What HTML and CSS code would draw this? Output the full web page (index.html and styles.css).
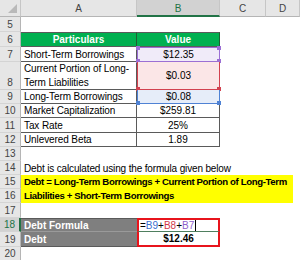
FILE: index.html
```html
<!DOCTYPE html>
<html>
<head>
<meta charset="utf-8">
<link rel="stylesheet" href="styles.css">
</head>
<body>
<div class="sheet">
  <div class="corner"><span class="tri"></span></div>
  <div class="ch">A</div>
  <div class="ch sel">B</div>
  <div class="ch">C</div>
  <div class="ch">D</div>

  <div class="rh">5</div><div class="blank w4"></div>

  <div class="rh">6</div>
  <div class="cell th tl">Particulars</div>
  <div class="cell th">Value</div>
  <div class="blank w2"></div>

  <div class="rh">7</div>
  <div class="cell lab">Short-Term Borrowings</div>
  <div class="cell val hl purple">$12.35<i class="h h1"></i><i class="h h2"></i><i class="h h3"></i><i class="h h4"></i></div>
  <div class="blank w2"></div>

  <div class="rh">8</div>
  <div class="cell lab two">Current Portion of Long-<br>Term Liabilities</div>
  <div class="cell val hl red">$0.03<i class="h h1"></i><i class="h h2"></i><i class="h h3"></i><i class="h h4"></i></div>
  <div class="blank w2"></div>

  <div class="rh">9</div>
  <div class="cell lab">Long-Term Borrowings</div>
  <div class="cell val hl blue">$0.08<i class="h h1"></i><i class="h h2"></i><i class="h h3"></i><i class="h h4"></i></div>
  <div class="blank w2"></div>

  <div class="rh">10</div>
  <div class="cell lab">Market Capitalization</div>
  <div class="cell val">$259.81</div>
  <div class="blank w2"></div>

  <div class="rh">11</div>
  <div class="cell lab">Tax Rate</div>
  <div class="cell val">25%</div>
  <div class="blank w2"></div>

  <div class="rh">12</div>
  <div class="cell lab">Unlevered Beta</div>
  <div class="cell val">1.89</div>
  <div class="blank w2"></div>

  <div class="rh">13</div><div class="blank w4"></div>

  <div class="rh">14</div>
  <div class="note w4">Debt is calculated using the formula given below</div>

  <div class="rh">15</div>
  <div class="yellow w4"><div class="ybox">Debt = Long-Term Borrowings + Current Portion of Long-Term<br>Liabilities + Short-Term Borrowings</div></div>
  <div class="rh">16</div>

  <div class="rh">17</div><div class="blank w4"></div>

  <div class="rh rsel">18</div>
  <div class="cell grey">Debt Formula</div>
  <div class="cell formula">=<span class="rb">B9</span>+<span class="rr">B8</span>+<span class="rp">B7</span><span class="caret"></span></div>
  <div class="blank w2"></div>

  <div class="rh">19</div>
  <div class="cell grey g2">Debt</div>
  <div class="cell result">$12.46</div>
  <div class="blank w2"></div>

  <div class="rh">20</div><div class="blank w4"></div>
</div>
</body>
</html>
```

FILE: styles.css
```css
* { box-sizing: border-box; }
body {
  margin: 0;
  background: #fff;
  font-family: "Liberation Sans", Arial, sans-serif;
  font-size: 10px;
  color: #000;
}
.sheet {
  display: grid;
  grid-template-columns: 21px 116px 83px 46px 34px;
  grid-template-rows: 17px 15px 15px 15px 28px 14px 14px 15px 14px 14px 14px 14px 14px 15px 14px 15px 14px;
  width: 300px;
  height: 260px;
  overflow: hidden;
}
.corner {
  background: #e6e6e6;
  border-right: 1px solid #c6c6c6;
  border-bottom: 1px solid #b5b5b5;
  position: relative;
}
.tri {
  position: absolute;
  right: 3px;
  bottom: 3px;
  width: 0;
  height: 0;
  border-left: 9px solid transparent;
  border-bottom: 9px solid #b9b9b9;
}
.ch {
  background: #e6e6e6;
  border-right: 1px solid #c6c6c6;
  border-bottom: 1px solid #b5b5b5;
  color: #444;
  display: flex;
  align-items: center;
  justify-content: center;
  padding-top: 1px;
}
.ch.sel {
  background: #d2d2d2;
  color: #217346;
  border-bottom: 2px solid #217346;
}
.rh {
  background: #e6e6e6;
  border-right: 1px solid #b5b5b5;
  border-bottom: 1px solid #d4d4d4;
  color: #444;
  display: flex;
  align-items: flex-end;
  justify-content: center;
  line-height: 13px;
}
.rh.rsel {
  color: #217346;
  background: #d2d2d2;
  border-right: 2px solid #217346;
}
.blank { background: #fff; }
.w2 { grid-column: span 2; }
.w4 { grid-column: span 4; }
.cell {
  position: relative;
  display: flex;
  align-items: center;
  padding: 0 2px;
  white-space: nowrap;
  border-right: 1px solid #5a5a5a;
  border-bottom: 1px solid #5a5a5a;
}
.th {
  background: #00b050;
  color: #fff;
  font-weight: bold;
  justify-content: center;
  border-top: 1px solid #5a5a5a;
  border-right-color: #1d5e33;
}
.lab { padding-left: 3px; letter-spacing: -0.1px; }
.two {
  white-space: normal;
  align-items: flex-start;
  line-height: 14px;
}
.val { justify-content: center; }
.hl { z-index: 1; }
.purple { background: #f0ebf9; border: 1px solid #9b6fd4; }
.red { background: #fbe6e7; border: 1px solid #d2414f; border-top: 0; }
.blue { background: #e6edf9; border: 1px solid #4f82d4; border-top: 0; }
.h {
  position: absolute;
  width: 4px;
  height: 4px;
}
.purple .h { background: #9b6fd4; }
.red .h { background: #d2414f; }
.blue .h { background: #4f82d4; }
.h1 { left: -2px; top: -2px; }
.h2 { right: -2px; top: -2px; }
.h3 { left: -2px; bottom: -2px; }
.h4 { right: -2px; bottom: -2px; }
.red .h1, .red .h2, .blue .h1, .blue .h2 { display: none; }
.note {
  display: flex;
  align-items: center;
  padding-left: 3px;
  white-space: nowrap;
  letter-spacing: -0.15px;
}
.yellow {
  grid-row: span 2;
  padding-right: 7px;
}
.ybox {
  background: #ffff00;
  height: 100%;
  font-weight: bold;
  font-size: 9.6px;
  letter-spacing: -0.35px;
  line-height: 14px;
  padding-left: 3px;
  white-space: nowrap;
}
.grey {
  background: #7f7f7f;
  color: #fff;
  font-weight: bold;
  padding-left: 3px;
  border-top: 1px solid #5a5a5a;
  border-left: 0;
  border-right: 0;
  border-bottom: 1px solid #9a9a9a;
}
.g2 { border-top: 0; border-bottom: 1px solid #5a5a5a; }
.formula {
  border: 2px solid #e8141c;
  border-bottom: 1px solid #4f7f5f;
  padding-left: 1px;
}
.rb { color: #3a6fd0; }
.rr { color: #d23a4a; }
.rp { color: #8f5fcc; }
.caret {
  display: inline-block;
  width: 1px;
  height: 11px;
  background: #000;
  margin-left: 1px;
}
.result {
  border: 2px solid #e8141c;
  border-top: 0;
  justify-content: center;
  font-weight: bold;
}
```
